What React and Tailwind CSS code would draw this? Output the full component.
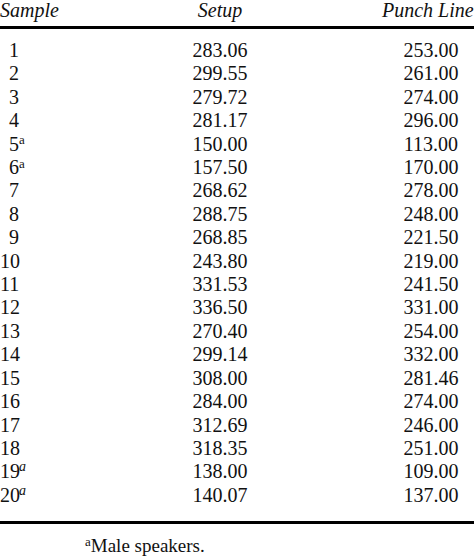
import React from "react";

const rows = [
  ["1", "", "283.06", "253.00"],
  ["2", "", "299.55", "261.00"],
  ["3", "", "279.72", "274.00"],
  ["4", "", "281.17", "296.00"],
  ["5", "r", "150.00", "113.00"],
  ["6", "r", "157.50", "170.00"],
  ["7", "", "268.62", "278.00"],
  ["8", "", "288.75", "248.00"],
  ["9", "", "268.85", "221.50"],
  ["10", "", "243.80", "219.00"],
  ["11", "", "331.53", "241.50"],
  ["12", "", "336.50", "331.00"],
  ["13", "", "270.40", "254.00"],
  ["14", "", "299.14", "332.00"],
  ["15", "", "308.00", "281.46"],
  ["16", "", "284.00", "274.00"],
  ["17", "", "312.69", "246.00"],
  ["18", "", "318.35", "251.00"],
  ["19", "i", "138.00", "109.00"],
  ["20", "i", "140.07", "137.00"],
];

export default function App() {
  return (
    <div
      className="w-[474px] h-[558px] overflow-hidden bg-white text-[#111] text-[20px]"
      style={{ fontFamily: '"Liberation Serif", "Times New Roman", serif' }}
    >
      <div className="grid grid-cols-[120px_200px_64px_90px] leading-[21px] italic">
        <div>Sample</div>
        <div className="text-center">Setup</div>
        <div />
        <div className="whitespace-nowrap -ml-[2px]">Punch Line</div>
      </div>
      <div className="mt-[5px] border-t-[3px] border-black" />
      <div className="pt-[10px]">
        {rows.map(([n, sup, a, b]) => (
          <div
            key={n}
            className="grid grid-cols-[120px_200px_64px_90px] leading-[23.42px] h-[23.42px]"
          >
            <div className="whitespace-nowrap">
              <span className="inline-block w-[19px] text-right">{n}</span>
              {sup === "r" && <sup className="text-[13px]">a</sup>}
              {sup === "i" && <sup className="text-[14px] italic">a</sup>}
            </div>
            <div className="text-center">{a}</div>
            <div />
            <div className="text-center pl-[4px]">{b}</div>
          </div>
        ))}
      </div>
      <div className="mt-[14px] border-t-[3px] border-black" />
      <div className="mt-[12px] pl-[85px] text-[19px] leading-[20px]">
        <sup className="text-[13px]">a</sup>Male speakers.
      </div>
    </div>
  );
}
